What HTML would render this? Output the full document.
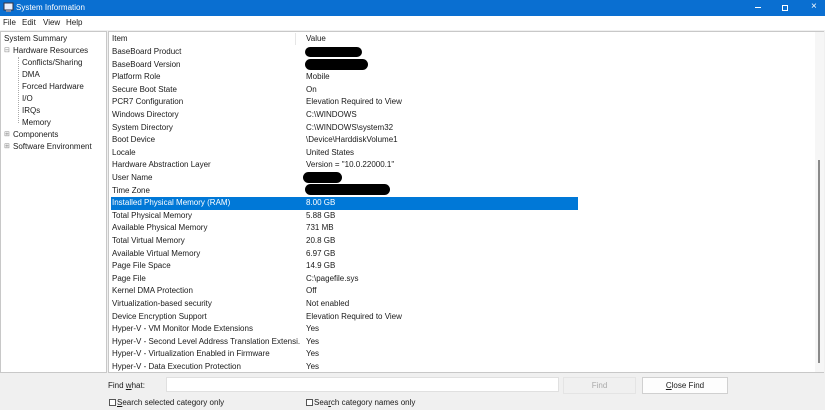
<!DOCTYPE html>
<html><head><style>
*{margin:0;padding:0;box-sizing:border-box}
body{width:825px;height:410px;overflow:hidden;background:#f0f0f0;font-family:"Liberation Sans",sans-serif;font-size:8px;color:#1a1a1a;position:relative}
.a{position:absolute;white-space:nowrap}
.title{left:0;top:0;width:825px;height:16px;background:#0a6fd1;color:#fff;font-size:8px}
.menu{left:0;top:16px;width:825px;height:14px;background:#fff}
.left{left:0;top:31px;width:107px;height:342px;background:#fff;border:1px solid #c8c8c8}
.right{left:108px;top:31px;width:716px;height:342px;background:#fff;border:1px solid #c8c8c8}
.row{position:absolute;left:3px;height:12.6px;line-height:12.6px;width:467px;white-space:nowrap}
.row span{position:absolute;left:194px}
.sel{background:#0078d7;color:#fff}
.blob{position:absolute;background:#000;border-radius:6px}
.tl{position:absolute;white-space:nowrap;line-height:12px}
.btn{position:absolute;height:17px;border:1px solid #d0d0d0;text-align:center;line-height:15px}
.cb{position:absolute;width:7px;height:7px;border:1px solid #555;background:#fff}
</style></head><body>
<div class="a title"><svg style="position:absolute;left:3px;top:2px" width="11" height="11"><rect x="1" y="1" width="9" height="7" fill="#e8eefc" stroke="#334"/><rect x="3" y="8" width="5" height="2" fill="#889"/></svg><span style="position:absolute;left:16px;top:3px">System Information</span>
<span style="position:absolute;left:755px;top:7px;width:6px;height:1px;background:#fff"></span>
<span style="position:absolute;left:782px;top:5px;width:6px;height:6px;border:1px solid #fff"></span>
<span style="position:absolute;left:811px;top:1px;font-size:10px">×</span></div>
<div class="a menu"><span style="position:absolute;left:3px;top:2px">File</span><span style="position:absolute;left:22px;top:2px">Edit</span><span style="position:absolute;left:43px;top:2px">View</span><span style="position:absolute;left:66px;top:2px">Help</span></div>
<div class="a left">
<div class="tl" style="left:3px;top:1px">System Summary</div>
<div class="tl" style="left:3px;top:13px;font-size:7px;color:#888">⊟</div><div class="tl" style="left:12px;top:13px">Hardware Resources</div>
<div style="position:absolute;left:17px;top:25px;width:1px;height:66px;border-left:1px dotted #aaa"></div>
<div class="tl" style="left:21px;top:25px">Conflicts/Sharing</div>
<div class="tl" style="left:21px;top:37px">DMA</div>
<div class="tl" style="left:21px;top:49px">Forced Hardware</div>
<div class="tl" style="left:21px;top:61px">I/O</div>
<div class="tl" style="left:21px;top:73px">IRQs</div>
<div class="tl" style="left:21px;top:85px">Memory</div>
<div class="tl" style="left:3px;top:97px;font-size:7px;color:#888">⊞</div><div class="tl" style="left:12px;top:97px">Components</div>
<div class="tl" style="left:3px;top:109px;font-size:7px;color:#888">⊞</div><div class="tl" style="left:12px;top:109px">Software Environment</div>
</div>
<div class="a right">
<div class="row" style="top:1px">Item<span>Value</span></div>
<div style="position:absolute;left:186px;top:1px;width:1px;height:12px;background:#e6e6e6"></div>
<div class="row" style="top:14px">BaseBoard Product<span></span></div>
<div class="row" style="top:26.6px">BaseBoard Version</div>
<div class="row" style="top:39.2px">Platform Role<span>Mobile</span></div>
<div class="row" style="top:51.8px">Secure Boot State<span>On</span></div>
<div class="row" style="top:64.4px">PCR7 Configuration<span>Elevation Required to View</span></div>
<div class="row" style="top:77px">Windows Directory<span>C:\WINDOWS</span></div>
<div class="row" style="top:89.6px">System Directory<span>C:\WINDOWS\system32</span></div>
<div class="row" style="top:102.2px">Boot Device<span>\Device\HarddiskVolume1</span></div>
<div class="row" style="top:114.8px">Locale<span>United States</span></div>
<div class="row" style="top:127.4px">Hardware Abstraction Layer<span>Version = "10.0.22000.1"</span></div>
<div class="row" style="top:140px">User Name</div>
<div class="row" style="top:152.6px">Time Zone</div>
<div class="row sel" style="top:165.2px;left:2px;padding-left:1px">Installed Physical Memory (RAM)<span style="left:195px">8.00 GB</span></div>
<div class="row" style="top:177.8px">Total Physical Memory<span>5.88 GB</span></div>
<div class="row" style="top:190.4px">Available Physical Memory<span>731 MB</span></div>
<div class="row" style="top:203px">Total Virtual Memory<span>20.8 GB</span></div>
<div class="row" style="top:215.6px">Available Virtual Memory<span>6.97 GB</span></div>
<div class="row" style="top:228.2px">Page File Space<span>14.9 GB</span></div>
<div class="row" style="top:240.8px">Page File<span>C:\pagefile.sys</span></div>
<div class="row" style="top:253.4px">Kernel DMA Protection<span>Off</span></div>
<div class="row" style="top:266px">Virtualization-based security<span>Not enabled</span></div>
<div class="row" style="top:278.6px">Device Encryption Support<span>Elevation Required to View</span></div>
<div class="row" style="top:291.2px">Hyper-V - VM Monitor Mode Extensions<span>Yes</span></div>
<div class="row" style="top:303.8px"><i style="font-style:normal;display:inline-block;width:188px;overflow:hidden;vertical-align:top">Hyper-V - Second Level Address Translation Extensi...</i><span>Yes</span></div>
<div class="row" style="top:316.4px">Hyper-V - Virtualization Enabled in Firmware<span>Yes</span></div>
<div class="row" style="top:329px">Hyper-V - Data Execution Protection<span>Yes</span></div>
<div class="blob" style="left:196px;top:15px;width:57px;height:10px"></div>
<div class="blob" style="left:196px;top:27px;width:63px;height:11px"></div>
<div class="blob" style="left:194px;top:140px;width:39px;height:11px"></div>
<div class="blob" style="left:196px;top:152px;width:85px;height:11px"></div>
<div style="position:absolute;left:706px;top:0;width:9px;height:340px;background:#f6f6f6"></div>
<div style="position:absolute;left:709px;top:128px;width:2px;height:203px;background:#8a8a8a"></div>
</div>
<div class="a" style="left:108px;top:381px">Find <u>w</u>hat:</div>
<div class="a" style="left:166px;top:377px;width:393px;height:15px;background:#fff;border:1px solid #e0e0e0"></div>
<div class="btn" style="left:563px;top:377px;width:73px;color:#aaa;background:#f0f0f0;border-color:#e4e4e4">Find</div>
<div class="btn" style="left:642px;top:377px;width:86px;background:#fdfdfd"><u>C</u>lose Find</div>
<div class="cb" style="left:109px;top:399px"></div><div class="a" style="left:117px;top:398px"><u>S</u>earch selected category only</div>
<div class="cb" style="left:306px;top:399px"></div><div class="a" style="left:314px;top:398px">Sea<u>r</u>ch category names only</div>
</body></html>
